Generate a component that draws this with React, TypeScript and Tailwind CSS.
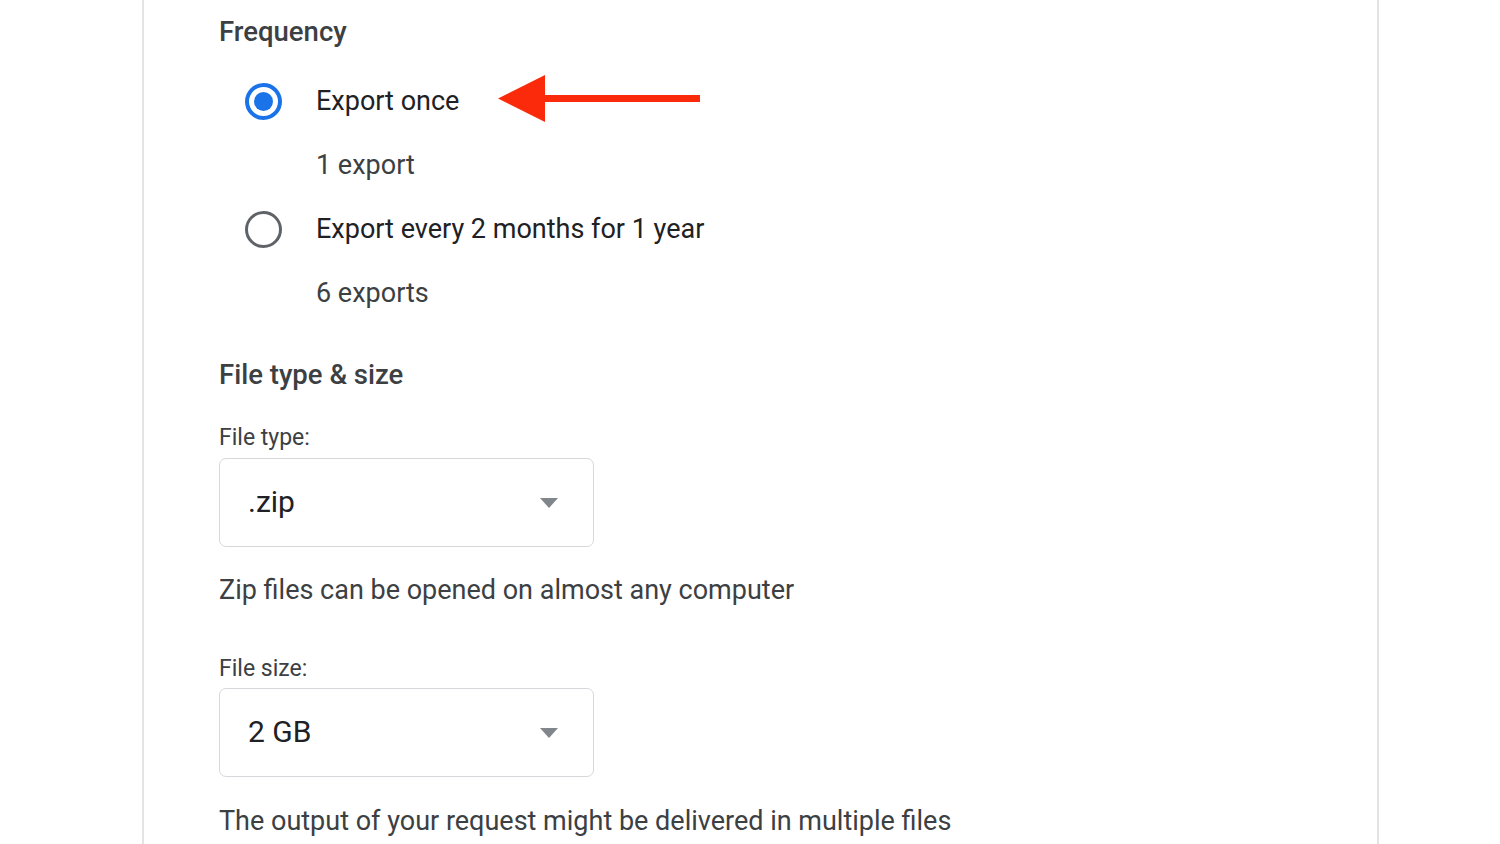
import React from "react";

function Radio({ checked }: { checked: boolean }) {
  return checked ? (
    <div className="w-[37px] h-[37px] rounded-full border-[4px] border-[#1a73e8] flex items-center justify-center">
      <div className="w-[19px] h-[19px] rounded-full bg-[#1a73e8]" />
    </div>
  ) : (
    <div className="w-[37px] h-[37px] rounded-full border-[3.5px] border-[#5f6368]" />
  );
}

function Select({ value }: { value: string }) {
  return (
    <div className="w-[375px] h-[89px] rounded-[7px] border-[1.5px] border-[#d6d8db] flex items-center justify-between pl-[28px] pr-[35px]">
      <span className="text-[30px] text-[#202124] pb-[3px]">{value}</span>
      <svg width="18" height="10" viewBox="0 0 18 10">
        <path d="M0 0 L18 0 L9 10 Z" fill="#80868b" />
      </svg>
    </div>
  );
}

export default function App() {
  return (
    <div
      className="w-[1500px] h-[844px] bg-white overflow-hidden"
      style={{ fontFamily: "Roboto, 'Liberation Sans', sans-serif" }}
    >
      <div className="ml-[142px] w-[1237px] h-full border-x-[2px] border-[#e4e4e4] pl-[75px] pt-[12px] flex flex-col items-start">
        <div className="h-[40px] leading-[40px] text-[27.5px] font-medium text-[#3c4043]">Frequency</div>

        <div className="mt-[17px] relative h-[64px] flex items-center pl-[26px] gap-[34px]">
          <Radio checked />
          <span className="text-[27px] text-[#202124]">Export once</span>
          <svg
            className="absolute left-[279px] top-[6px]"
            width="203"
            height="48"
            viewBox="0 0 203 48"
          >
            <path d="M0 23.5 L47 0 L47 20 L202 20 L202 27 L47 27 L47 47 Z" fill="#fb2a0a" />
          </svg>
        </div>
        <div className="h-[64px] flex items-center pl-[97px]">
          <span className="text-[27px] text-[#3c4043]">1 export</span>
        </div>
        <div className="h-[64px] flex items-center pl-[26px] gap-[34px]">
          <Radio checked={false} />
          <span className="text-[27px] text-[#202124]">Export every 2 months for 1 year</span>
        </div>
        <div className="h-[64px] flex items-center pl-[97px]">
          <span className="text-[27px] text-[#3c4043]">6 exports</span>
        </div>

        <div className="mt-[30px] h-[40px] leading-[40px] text-[27.5px] font-medium text-[#3c4043]">File type &amp; size</div>

        <div className="mt-[28px] h-[30px] leading-[30px] text-[23px] text-[#3c4043]">File type:</div>
        <div className="mt-[5px]">
          <Select value=".zip" />
        </div>
        <div className="mt-[23px] h-[40px] leading-[40px] text-[27px] text-[#3c4043]">
          Zip files can be opened on almost any computer
        </div>

        <div className="mt-[44px] h-[30px] leading-[30px] text-[23px] text-[#3c4043]">File size:</div>
        <div className="mt-[4px]">
          <Select value="2 GB" />
        </div>
        <div className="mt-[24px] h-[40px] leading-[40px] text-[27px] text-[#3c4043]">
          The output of your request might be delivered in multiple files
        </div>
      </div>
    </div>
  );
}
